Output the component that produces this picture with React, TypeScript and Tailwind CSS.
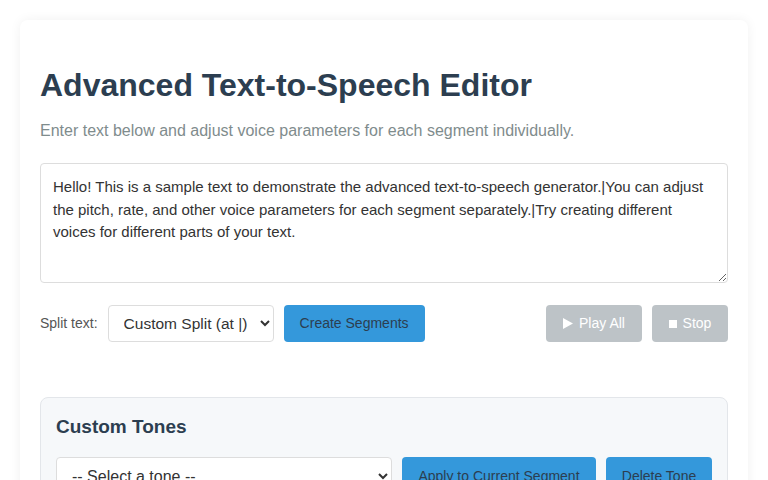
import React from "react";

export default function App() {
  const text =
    "Hello! This is a sample text to demonstrate the advanced text-to-speech generator.|You can adjust the pitch, rate, and other voice parameters for each segment separately.|Try creating different voices for different parts of your text.";
  return (
    <div className="min-h-[480px] bg-white pt-5 px-5 font-['Liberation_Sans',Arial,sans-serif] leading-[1.5]">
      <div className="bg-white rounded-lg shadow-[0_0_12px_rgba(0,0,0,0.06)] px-5 pt-[41px] pb-10">
        <h1 className="text-[32px] font-bold text-[#2c3e50] leading-[48px]">Advanced Text-to-Speech Editor</h1>
        <p className="mt-[10px] text-[16px] leading-[24px] text-[#7f8c8d]">
          Enter text below and adjust voice parameters for each segment individually.
        </p>
        <textarea
          defaultValue={text}
          className="mt-5 block w-full h-[120px] border border-[#dddddd] rounded px-3 py-3 text-[15px] leading-[22.5px] text-[#333333] bg-white outline-none"
        />
        <div className="mt-[22px] flex items-center gap-[10px]">
          <span className="text-[14px] text-[#555555]">Split text:</span>
          <select
            defaultValue="custom"
            className="h-[37px] w-[166px] border border-[#dddddd] rounded pl-[11px] pr-[4px] text-[15.5px] text-[#333333] bg-white"
          >
            <option value="custom">Custom Split (at |)</option>
            <option value="sentence">Sentence</option>
          </select>
          <button className="h-[37px] w-[141px] rounded bg-[#3498db] text-[14px] text-[#2c3e50]">Create Segments</button>
          <div className="flex-1" />
          <button className="h-[37px] w-[96px] rounded bg-[#bdc3c7] text-[14px] text-white flex items-center justify-center gap-[6px]">
            <svg width="10" height="11" viewBox="0 0 10 11"><path d="M0 0 L10 5.5 L0 11 Z" fill="white" /></svg>
            Play All
          </button>
          <button className="h-[37px] w-[76px] rounded bg-[#bdc3c7] text-[14px] text-white flex items-center justify-center gap-[6px]">
            <span className="inline-block w-[8px] h-[8px] bg-white" />
            Stop
          </button>
        </div>
        <div className="mt-[55px] border border-[#e3e6ea] rounded-lg bg-[#f6f8fa] px-[15px] pt-[15px] pb-5">
          <h2 className="text-[19px] font-bold text-[#2c3e50] leading-[28px]">Custom Tones</h2>
          <div className="mt-[16px] flex items-center gap-[10px]">
            <select
              defaultValue=""
              className="flex-1 h-[38px] border border-[#dddddd] rounded pl-[11px] pr-[4px] text-[16px] text-[#333333] bg-white"
            >
              <option value="">-- Select a tone --</option>
            </select>
            <button className="h-[38px] w-[194px] rounded bg-[#3498db] text-[14px] text-[#2c3e50]">Apply to Current Segment</button>
            <button className="h-[38px] w-[106px] rounded bg-[#3498db] text-[14px] text-[#2c3e50]">Delete Tone</button>
          </div>
        </div>
      </div>
    </div>
  );
}
